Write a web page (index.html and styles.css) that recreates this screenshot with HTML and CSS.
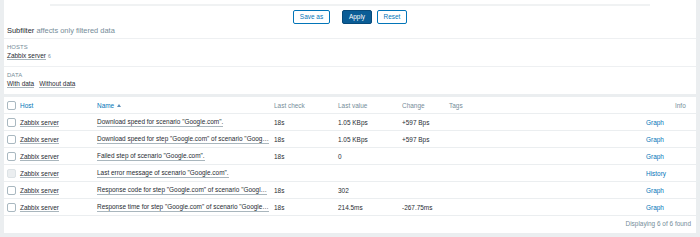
FILE: index.html
```html
<!DOCTYPE html>
<html>
<head>
<meta charset="utf-8">
<link rel="stylesheet" href="styles.css">
</head>
<body>
<div class="panel filter">
  <div class="filter-fields"></div>
  <div class="filter-buttons">
    <button class="btn btn-alt btn-save">Save as</button>
    <button class="btn btn-primary">Apply</button>
    <button class="btn btn-alt">Reset</button>
  </div>
  <div class="subfilter-title"><span class="st-main">Subfilter</span> <span class="st-note">affects only filtered data</span></div>
  <div class="sf-section">
    <div class="sf-label">HOSTS</div>
    <div class="sf-values"><span class="sf-link">Zabbix server</span> <sup class="sf-count">6</sup></div>
  </div>
  <div class="sf-section sf-last">
    <div class="sf-label">DATA</div>
    <div class="sf-values"><span class="sf-link">With data</span><span class="sf-link">Without data</span></div>
  </div>
</div>

<div class="panel list">
  <table class="list-table">
    <colgroup>
      <col class="c-check"><col class="c-host"><col class="c-name"><col class="c-last"><col class="c-value"><col class="c-change"><col class="c-tags"><col class="c-link"><col class="c-info">
    </colgroup>
    <thead>
      <tr>
        <th><span class="cb"></span></th>
        <th><span class="th-link">Host</span></th>
        <th><span class="th-link">Name <span class="arrow-up"></span></span></th>
        <th>Last check</th>
        <th>Last value</th>
        <th>Change</th>
        <th>Tags</th>
        <th></th>
        <th>Info</th>
      </tr>
    </thead>
    <tbody>
      <tr>
        <td><span class="cb"></span></td>
        <td><span class="u-link">Zabbix server</span></td>
        <td><span class="u-link name">Download speed for scenario "Google.com".</span></td>
        <td>18s</td><td>1.05 KBps</td><td>+597 Bps</td><td></td>
        <td><span class="blue">Graph</span></td><td></td>
      </tr>
      <tr>
        <td><span class="cb"></span></td>
        <td><span class="u-link">Zabbix server</span></td>
        <td><span class="u-link name">Download speed for step "Google.com" of scenario "Goog…</span></td>
        <td>18s</td><td>1.05 KBps</td><td>+597 Bps</td><td></td>
        <td><span class="blue">Graph</span></td><td></td>
      </tr>
      <tr>
        <td><span class="cb"></span></td>
        <td><span class="u-link">Zabbix server</span></td>
        <td><span class="u-link name">Failed step of scenario "Google.com".</span></td>
        <td>18s</td><td>0</td><td></td><td></td>
        <td><span class="blue">Graph</span></td><td></td>
      </tr>
      <tr>
        <td><span class="cb cb-disabled"></span></td>
        <td><span class="u-link">Zabbix server</span></td>
        <td><span class="u-link name">Last error message of scenario "Google.com".</span></td>
        <td></td><td></td><td></td><td></td>
        <td><span class="blue">History</span></td><td></td>
      </tr>
      <tr>
        <td><span class="cb"></span></td>
        <td><span class="u-link">Zabbix server</span></td>
        <td><span class="u-link name">Response code for step "Google.com" of scenario "Googl…</span></td>
        <td>18s</td><td>302</td><td></td><td></td>
        <td><span class="blue">Graph</span></td><td></td>
      </tr>
      <tr>
        <td><span class="cb"></span></td>
        <td><span class="u-link">Zabbix server</span></td>
        <td><span class="u-link name">Response time for step "Google.com" of scenario "Google…</span></td>
        <td>18s</td><td>214.5ms</td><td>-267.75ms</td><td></td>
        <td><span class="blue">Graph</span></td><td></td>
      </tr>
    </tbody>
  </table>
  <div class="list-footer">Displaying 6 of 6 found</div>
</div>
</body>
</html>
```

FILE: styles.css
```css
html, body {
  margin: 0;
  padding: 0;
}
body {
  background: #ebeef0;
  font-family: "Liberation Sans", Arial, sans-serif;
  font-size: 6.45px;
  color: #1f2c33;
  height: 237px;
  overflow: hidden;
}
.panel {
  background: #ffffff;
  margin: 0 4px;
}
.filter {
  height: 94px;
}
.filter-fields {
  margin: 0 46px;
  height: 4px;
  border-bottom: 2px solid #f0f2f3;
}
.filter-buttons {
  display: flex;
  justify-content: center;
  gap: 5px;
  padding-top: 4px;
}
.btn {
  font-family: "Liberation Sans", Arial, sans-serif;
  font-size: 6.45px;
  height: 14px;
  padding: 0;
  border-radius: 2px;
  border: 1px solid #0275b8;
  background: #ffffff;
  color: #0275b8;
  width: 30px;
  line-height: 12px;
}
.btn-save {
  width: 37px;
  margin-right: 7px;
}
.btn-primary {
  background: #0b5d96;
  border-color: #074a7a;
  color: #ffffff;
}
.subfilter-title {
  height: 14px;
  line-height: 14px;
  padding-left: 3px;
  font-size: 7.45px;
  border-bottom: 1px solid #eef0f2;
}
.st-main {
  color: #1f2c33;
}
.st-note {
  color: #768d99;
}
.sf-section {
  height: 27px;
  padding-left: 3px;
  border-bottom: 1px solid #eef0f2;
  box-sizing: content-box;
}
.sf-last {
  border-bottom: none;
}
.sf-label {
  padding-top: 4px;
  height: 8px;
  line-height: 8px;
  font-size: 5.9px;
  color: #768d99;
  letter-spacing: 0.1px;
}
.sf-values {
  height: 10px;
  line-height: 10px;
  display: flex;
  align-items: center;
  gap: 5px;
}
.sf-link {
  border-bottom: 1px solid #a9b6bd;
  line-height: 7px;
}
.sf-count {
  color: #768d99;
  font-size: 5px;
  margin-left: -3px;
  vertical-align: baseline;
  line-height: 7px;
}
.list {
  margin-top: 3px;
  height: 136px;
}
.list-table {
  width: 100%;
  table-layout: fixed;
  border-collapse: collapse;
}
.c-check { width: 16px; }
.c-host { width: 77px; }
.c-name { width: 177px; }
.c-last { width: 64px; }
.c-value { width: 64px; }
.c-change { width: 47px; }
.c-tags { width: 197px; }
.c-link { width: 29px; }
.c-info { width: 21px; }
.list-table th,
.list-table td {
  padding: 0;
  height: 16px;
  text-align: left;
  vertical-align: middle;
  border-bottom: 1px solid #ebeef0;
  white-space: nowrap;
  font-weight: normal;
}
.list-table th {
  color: #768d99;
}
.list-table th:first-child,
.list-table td:first-child {
  padding-left: 3px;
}
.cb {
  display: block;
  width: 7px;
  height: 7px;
  border: 1px solid #a9b8c0;
  border-radius: 2px;
  background: #ffffff;
}
.cb-disabled {
  background: #ebeef0;
  border-color: #dde3e6;
}
.th-link {
  color: #0275b8;
}
.arrow-up {
  display: inline-block;
  width: 0;
  height: 0;
  border-left: 2px solid transparent;
  border-right: 2px solid transparent;
  border-bottom: 3px solid #5b8fb8;
  vertical-align: 1px;
  margin-left: 1px;
}
.u-link {
  border-bottom: 1px solid #a9b6bd;
}
.name {
  display: inline-block;
  white-space: nowrap;
  vertical-align: middle;
  line-height: 8px;
}
.blue {
  color: #0275b8;
}
.list-footer {
  height: 16px;
  line-height: 16px;
  text-align: right;
  padding-right: 5px;
  color: #768d99;
}
```
